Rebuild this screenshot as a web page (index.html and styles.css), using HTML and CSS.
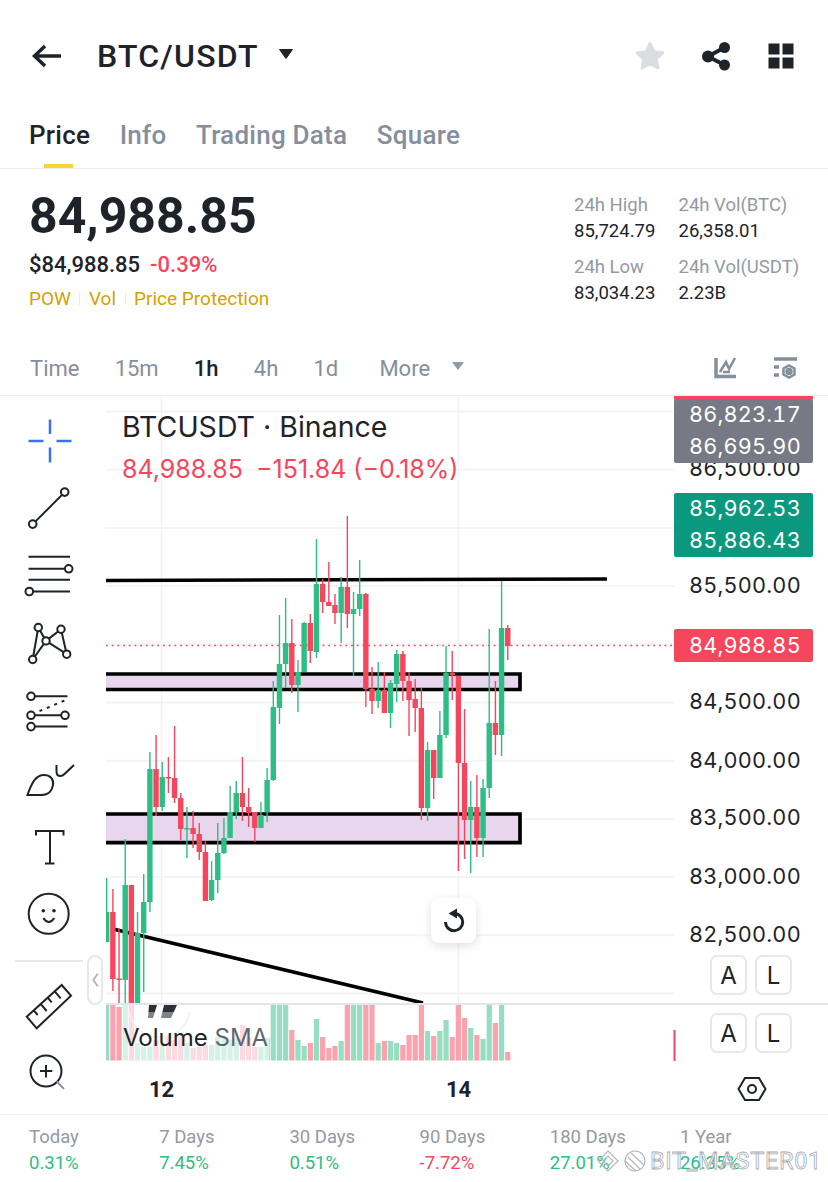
FILE: index.html
```html
<!DOCTYPE html>
<html lang="en">

<head>
    <meta charset="UTF-8">
    <meta name="viewport" content="width=device-width, initial-scale=1.0">
    <title>BTC/USDT</title>
    <link rel="stylesheet" href="styles.css">
</head>

<body>
    <header class="top-bar">
        <svg class="back" viewBox="0 0 30 24"><path d="M29 12H3M13 2L2.500 12L13 22" /></svg>
        <h1 class="pair">BTC/USDT</h1>
        <svg class="pair-caret" viewBox="0 0 16 12"><path d="M1.500 1.500H14.500L8 10.500Z" /></svg>
        <div class="top-actions">
            <svg class="star" viewBox="0 0 32 32"><path d="M16 3.500L19.800 11.700L28.800 12.800L22.200 19L23.900 27.900L16 23.500L8.100 27.900L9.800 19L3.200 12.800L12.200 11.700Z" /></svg>
            <svg class="share" viewBox="0 0 30 30">
                <path d="M22.500 6.500L6 15.500L22.500 24" />
                <circle cx="22.500" cy="6.500" r="5.500" />
                <circle cx="6" cy="15.500" r="6" />
                <circle cx="22.500" cy="24" r="5.500" />
            </svg>
            <svg class="apps" viewBox="0 0 26 26">
                <rect x="0.500" y="0.500" width="11" height="11" />
                <rect x="14.500" y="0.500" width="11" height="11" />
                <rect x="0.500" y="14.500" width="11" height="11" />
                <rect x="14.500" y="14.500" width="11" height="11" />
            </svg>
        </div>
    </header>

    <nav class="tabs">
        <a class="tab active">Price</a>
        <a class="tab">Info</a>
        <a class="tab">Trading Data</a>
        <a class="tab">Square</a>
    </nav>

    <section class="summary">
        <div class="quote">
            <div class="last">84,988.85</div>
            <div class="sub"><span>$84,988.85</span><span class="down">-0.39%</span></div>
            <div class="tags">
                <span>POW</span><i></i><span>Vol</span><i></i><span>Price Protection</span>
            </div>
        </div>
        <div class="stats">
            <div><label>24h High</label><b>85,724.79</b></div>
            <div><label>24h Vol(BTC)</label><b>26,358.01</b></div>
            <div><label>24h Low</label><b>83,034.23</b></div>
            <div><label>24h Vol(USDT)</label><b>2.23B</b></div>
        </div>
    </section>

    <div class="intervals">
        <span>Time</span>
        <span>15m</span>
        <span class="current">1h</span>
        <span>4h</span>
        <span>1d</span>
        <span class="more">More</span>
        <svg class="more-caret" viewBox="0 0 14 10"><path d="M1 1H13L7 9Z" /></svg>
        <div class="interval-icons">
            <svg viewBox="0 0 24 22">
                <path d="M2 1V19.500H22" />
                <path class="thin" d="M6 15L12 5L15 12L21 1" />
                <path class="thin" d="M9 15H16" />
            </svg>
            <svg viewBox="0 0 24 22">
                <path d="M1 2H24" />
                <path d="M1 10H6M1 18H6" />
                <path class="thin" d="M16 8.500L21.500 11.500V17.500L16 20.500L10.500 17.500V11.500Z" />
                <circle cx="16" cy="14.500" r="2" />
            </svg>
        </div>
    </div>

    <section class="chart">
        <div class="tools">
            <svg viewBox="16 407 68 67.600">
                <path class="blue" d="M50 419.500V434M50 447.500V462.500M28.500 441H43.500M56.500 441H71.500" />
            </svg>
            <svg viewBox="16 474.600 68 67.600">
                <path d="M35.500 521L62 494.500" />
                <circle cx="32.700" cy="523.700" r="3.800" />
                <circle cx="64.700" cy="491.700" r="3.800" />
            </svg>
            <svg viewBox="16 542.200 68 67.600">
                <path d="M28.500 557H70M28.500 569H65M28.500 580H70M33 591.700H70" />
                <circle cx="68.700" cy="569" r="3.800" />
                <circle cx="29.300" cy="591.700" r="3.800" />
            </svg>
            <svg viewBox="16 609.800 68 67.600">
                <path d="M38.300 627.300L32.700 659.300M38.300 627.300L46 640.700L32.700 659.300M46 640.700L61 629L66.700 654L46 640.700" />
                <circle cx="38.300" cy="627.300" r="3.700" />
                <circle cx="61" cy="629" r="3.700" />
                <circle cx="46" cy="640.700" r="3.700" />
                <circle cx="32.700" cy="659.300" r="3.700" />
                <circle cx="66.700" cy="654" r="3.700" />
            </svg>
            <svg viewBox="16 677.400 68 67.600">
                <path d="M35 696.700H67.500M35 715.700H61M35 727H67.500" />
                <path class="dash" d="M39.500 711.500L65 700.700" />
                <circle cx="31" cy="696.700" r="3.800" />
                <circle cx="31" cy="715.700" r="3.800" />
                <circle cx="65" cy="715.700" r="3.800" />
                <circle cx="31" cy="727" r="3.800" />
            </svg>
            <svg viewBox="16 745 68 67.600">
                <path d="M27.500 795C32 782 36 775 44 775C50 775 54 779 53 785C52 791 48 795 42 795Z" />
                <path d="M56.500 765V771.500Q56.500 776 60.500 776Q62.500 776 64.500 774L74 765" />
            </svg>
            <svg viewBox="16 812.600 68 67.600">
                <path d="M36 835V830.500H63.500V835M50 830.500V863M45 863H54.500" />
            </svg>
            <svg viewBox="16 880.200 68 67.600">
                <circle cx="48.700" cy="914" r="20" />
                <circle class="solid" cx="43.300" cy="911" r="1.800" />
                <circle class="solid" cx="54" cy="911" r="1.800" />
                <path d="M43.300 918.300Q48.700 926 54.300 918.300" />
            </svg>
            <hr class="tool-line">
            <svg viewBox="16 972 68 67.600">
                <path d="M26.700 1016.700L61.700 985L71 995.700L36.700 1028.300Z" />
                <path d="M33.700 1010.400L37.700 1015M40.700 1004.100L46.700 1011M47.700 997.700L51.700 1002.300M54.700 991.400L60.700 998.300" />
            </svg>
            <svg viewBox="16 1039.600 68 67.600">
                <circle cx="46" cy="1071.700" r="15.500" />
                <path d="M40 1071.700H52.300M46 1065.500V1078" />
                <path class="muted" d="M56.700 1082L64 1089.500" />
            </svg>
            <div class="collapse">
                <svg viewBox="0 0 10 18"><path d="M7.500 2L2.500 9L7.500 16" /></svg>
            </div>
        </div>

        <div class="plot">
            <svg id="canvas" class="canvas" viewBox="106 396 722 718"></svg>

            <div class="legend">
                <div class="legend-title">BTCUSDT · Binance</div>
                <div class="legend-values"><span>84,988.85</span><span>−151.84 (−0.18%)</span></div>
            </div>
            <div class="volume-legend">Volume <span>SMA</span></div>

            <div class="reset">
                <svg viewBox="0 0 28 28">
                    <path d="M14.300 6.500A8.600 8.600 0 1 1 5.500 15" />
                    <path class="solid" d="M17 1.500L8.500 6.500L17 11.500Z" />
                </svg>
            </div>

            <div class="scale-btns upper"><span>A</span><span>L</span></div>
            <div class="scale-btns lower"><span>A</span><span>L</span></div>

            <div class="time-label first">12</div>
            <div class="time-label second">14</div>
            <svg class="hex" viewBox="0 0 30 26">
                <path d="M8 2H22L28.500 13L22 24H8L1.500 13Z" />
                <circle cx="15" cy="13" r="4" />
            </svg>
        </div>
    </section>

    <footer class="returns">
        <div><label>Today</label><b class="up">0.31%</b></div>
        <div><label>7 Days</label><b class="up">7.45%</b></div>
        <div><label>30 Days</label><b class="up">0.51%</b></div>
        <div><label>90 Days</label><b class="down">-7.72%</b></div>
        <div><label>180 Days</label><b class="up">27.01%</b></div>
        <div><label>1 Year</label><b class="up">26.35%</b></div>
        <div class="watermark">
            <svg viewBox="0 0 50 22">
                <path d="M11 1L21 11L11 21L1 11ZM6 11L11 6L16 11L11 16Z" />
                <circle cx="38" cy="11" r="10" />
                <path d="M31 7L43 19M28 11L39 21M34 3L47 15" />
            </svg>
            <span>BIT_MASTER01</span>
        </div>
    </footer>

    <script src="chart.js"></script>
</body>

</html>
```

FILE: styles.css
```css
* {
    box-sizing: border-box;
}

body {
    margin: 0;
    width: 828px;
    height: 1182px;
    overflow: hidden;
    background: #fff;
    color: #1e2329;
    font-family: Roboto, 'Noto Sans', sans-serif;
}

.top-bar {
    display: flex;
    align-items: center;
    height: 112px;
    padding: 0 34px 0 32px;
}

.back {
    width: 30px;
    height: 24px;
    margin-right: 35px;
    fill: none;
    stroke: #1e2329;
    stroke-width: 3.5;
}

.pair {
    margin: 0;
    font-size: 32px;
    font-weight: 500;
    letter-spacing: 1.2px;
}

.pair-caret {
    width: 16px;
    height: 12px;
    margin: 0 0 4px 19px;
    fill: #1e2329;
    stroke: #1e2329;
    stroke-linejoin: round;
}

.top-actions {
    display: flex;
    align-items: center;
    gap: 36px;
    margin-left: auto;
}

.star {
    width: 32px;
    height: 32px;
    fill: #dadde1;
    stroke: #dadde1;
    stroke-width: 3;
    stroke-linejoin: round;
}

.share {
    width: 30px;
    height: 30px;
    fill: #1e2329;
}

.share path {
    fill: none;
    stroke: #1e2329;
    stroke-width: 4;
}

.apps {
    width: 26px;
    height: 26px;
    fill: #1e2329;
}

.tabs {
    display: flex;
    gap: 29.500px;
    height: 57px;
    padding-left: 29px;
    border-bottom: 1px solid #eceef0;
}

.tab {
    position: relative;
    height: 46px;
    line-height: 46px;
    font-size: 26px;
    font-weight: 500;
    letter-spacing: .25px;
    color: #848e9c;
}

.tab.active {
    color: #1e2329;
}

.tab.active::after {
    content: '';
    position: absolute;
    left: 15px;
    bottom: -10px;
    width: 29px;
    height: 4px;
    background: #fcd535;
}

.summary {
    display: flex;
    justify-content: space-between;
    height: 172px;
}

.quote {
    padding: 19px 0 0 29px;
}

.last {
    font-size: 50px;
    line-height: 56px;
    font-weight: 700;
}

.sub {
    display: flex;
    gap: 10px;
    margin-top: 7px;
    font-size: 22px;
    line-height: 28px;
    font-weight: 500;
}

.down {
    color: #f6465d;
}

.up {
    color: #2ebd85;
}

.tags {
    display: flex;
    align-items: center;
    gap: 8.500px;
    margin-top: 8px;
    font-size: 19px;
    line-height: 24px;
    color: #d89f00;
}

.tags i {
    width: 1px;
    height: 12px;
    background: #e6e8ea;
}

.stats {
    display: grid;
    grid-template-columns: 104.500px 1fr;
    grid-auto-rows: 62px;
    width: 254px;
    padding-top: 23px;
    font-size: 18.500px;
    line-height: 26px;
}

.stats label,
.returns label {
    display: block;
    color: #929aa5;
}

.stats b,
.returns b {
    display: block;
    font-weight: 400;
}

.intervals {
    display: flex;
    align-items: center;
    gap: 35.200px;
    height: 54px;
    padding: 0 31px 0 30px;
    font-size: 22px;
    color: #848e9c;
}

.intervals .current {
    color: #1e2329;
    font-weight: 500;
}

.more {
    margin-left: 6px;
}

.more-caret {
    width: 14px;
    height: 10px;
    margin: -4px 0 0 -14px;
    fill: #929aa5;
}

.interval-icons {
    display: flex;
    gap: 35px;
    margin-left: auto;
}

.interval-icons svg {
    width: 24px;
    height: 22px;
    fill: none;
    stroke: #848e9c;
    stroke-width: 3.5;
}

.interval-icons .thin {
    stroke-width: 2.500;
}

.chart {
    display: flex;
    height: 719px;
    border-top: 1px solid #eaecef;
}

.tools {
    position: relative;
    flex: none;
    width: 106px;
    padding: 11px 0 0 16px;
}

.tools > svg {
    display: block;
    width: 68px;
    height: 67.600px;
    fill: none;
    stroke: #1e2329;
    stroke-width: 2;
}

.tools circle {
    fill: #fff;
}

.tools .blue {
    stroke: #3b73e6;
    stroke-width: 2.500;
}

.tools .solid {
    fill: #1e2329;
    stroke: none;
}

.tools .dash {
    stroke-dasharray: 3 5;
}

.tools .muted {
    stroke: #848e9c;
}

.tool-line {
    width: 68px;
    height: 2px;
    margin: 12px 0 10px -1px;
    border: 0;
    background: #e6e8ea;
}

.collapse {
    position: absolute;
    left: 87px;
    top: 559px;
    display: flex;
    align-items: center;
    justify-content: center;
    width: 16px;
    height: 50px;
    background: #fff;
    border: 2px solid #e6e8ee;
    border-radius: 8px;
}

.collapse svg {
    width: 9px;
    height: 16px;
    fill: none;
    stroke: #aeb4bc;
    stroke-width: 2;
}

.plot {
    position: relative;
    flex: 1;
}

.canvas {
    display: block;
    width: 722px;
    height: 718px;
    font-family: Inter, Roboto, sans-serif;
}

.axis-text {
    font-size: 21.700px;
    letter-spacing: .2px;
    font-variant-numeric: tabular-nums;
    fill: #1e2329;
}

.tag-text {
    font-size: 21.700px;
    letter-spacing: .2px;
    font-variant-numeric: tabular-nums;
    fill: #fff;
}

.legend {
    position: absolute;
    left: 16px;
    top: 12px;
    font-family: Inter, Roboto, sans-serif;
}

.legend-title {
    font-size: 28.500px;
    line-height: 38px;
}

.legend-values {
    display: flex;
    gap: 13px;
    margin-top: 7px;
    font-size: 25px;
    line-height: 32px;
    color: #f6465d;
}

.volume-legend {
    position: absolute;
    left: 17px;
    top: 626px;
    font-family: Inter, Roboto, sans-serif;
    font-size: 24px;
    line-height: 32px;
}

.volume-legend span {
    color: #5e6673;
}

.reset {
    position: absolute;
    left: 325px;
    top: 502px;
    display: flex;
    align-items: center;
    justify-content: center;
    width: 45px;
    height: 45px;
    background: #fff;
    border-radius: 8px;
    box-shadow: 0 3px 10px rgba(30, 35, 41, .14);
}

.reset svg {
    width: 28px;
    height: 28px;
    fill: none;
    stroke: #1e2329;
    stroke-width: 3;
}

.reset .solid {
    fill: #1e2329;
    stroke: none;
}

.scale-btns {
    position: absolute;
    left: 604px;
    display: flex;
    gap: 8px;
}

.scale-btns.upper {
    top: 559px;
}

.scale-btns.lower {
    top: 617px;
}

.scale-btns span {
    width: 37px;
    height: 40px;
    line-height: 37px;
    text-align: center;
    font-family: Inter, Roboto, sans-serif;
    font-size: 24px;
    background: #fff;
    border: 2px solid #e6e8ee;
    border-radius: 7px;
}

.time-label {
    position: absolute;
    top: 680px;
    width: 40px;
    text-align: center;
    font-size: 22px;
    line-height: 28px;
    font-weight: 700;
}

.time-label.first {
    left: 35.500px;
}

.time-label.second {
    left: 332.500px;
}

.hex {
    position: absolute;
    left: 631px;
    top: 680px;
    width: 30px;
    height: 26px;
    fill: none;
    stroke: #1e2329;
    stroke-width: 2;
}

.returns {
    position: relative;
    display: grid;
    grid-template-columns: repeat(6, 130.200px);
    height: 68px;
    padding: 9px 0 0 29px;
    font-size: 18.500px;
    line-height: 26px;
    border-top: 1px solid #eff0f2;
}

.watermark {
    position: absolute;
    left: 597px;
    top: 33px;
    display: flex;
    align-items: center;
    gap: 3px;
    font-size: 23.500px;
    line-height: 26px;
    letter-spacing: .7px;
    color: rgba(255, 255, 255, .7);
    -webkit-text-stroke: .8px #a9adb2;
}

.watermark svg {
    width: 50px;
    height: 22px;
    fill: none;
    stroke: #b4b7bb;
    stroke-width: 1.200;
}
```

FILE: chart.js
```js
const GREEN = '#2ebd85'
const RED = '#f6465d'
const X0 = 106.7
const STEP = 6.17

// colour, wick top, wick bottom, body top, body bottom, volume top
const candles = [
    ['g', 878, 942, 912, 942, 1005],
    ['r', 889, 991, 912, 979, 1005],
    ['r', 928, 1003, 978.5, 980, 1007],
    ['g', 839, 1003, 885, 980, 1005],
    ['r', 885, 1003, 885, 1003, 1005],
    ['g', 912, 1003, 933, 1003, 1043],
    ['g', 874, 992, 902, 933, 1047],
    ['g', 752, 912, 769, 902, 1047],
    ['r', 735, 816, 769, 807, 1040],
    ['g', 762, 811, 777, 807, 1045],
    ['r', 757, 793, 777, 778, 1037],
    ['r', 726, 803, 778, 798, 1040],
    ['r', 793, 840, 798, 829, 1037],
    ['g', 807, 858, 828, 829, 1043],
    ['r', 811, 848, 828, 834, 1048],
    ['r', 823, 860, 834, 852, 1047],
    ['r', 841, 901, 852, 901, 1045],
    ['g', 861, 901, 880, 900, 1045],
    ['g', 823, 893, 853, 880, 1037],
    ['g', 818, 854, 838, 853, 1038],
    ['g', 786, 838, 812, 838, 1040],
    ['g', 781, 819, 793, 812, 1038],
    ['r', 757, 821, 793, 807, 1025],
    ['r', 788, 827, 807, 813, 1037],
    ['r', 812, 842, 812, 828, 1047],
    ['g', 802, 828, 815, 828, 1047],
    ['g', 768, 822, 780, 812, 1038],
    ['g', 681, 781, 707, 780, 1005],
    ['g', 615, 724, 664, 708, 1005],
    ['g', 598, 688, 643, 664, 1005],
    ['r', 619, 693, 643, 685, 1030],
    ['g', 660, 712, 672, 685, 1040],
    ['g', 622, 672, 623, 672, 1046],
    ['r', 614, 663, 623, 651, 1043],
    ['g', 539, 658, 584, 652, 1019],
    ['r', 579, 613, 584, 602, 1037],
    ['r', 562, 606, 602, 606, 1048],
    ['r', 594, 624, 605, 613, 1046],
    ['g', 577, 643, 587, 613, 1041],
    ['r', 516, 628, 587, 614, 1005],
    ['g', 592, 676, 609, 614, 1005],
    ['g', 560, 616, 594, 609, 1005],
    ['r', 593, 707, 594, 689, 1005],
    ['r', 667, 714, 689, 701, 1005],
    ['g', 662, 708, 690, 701, 1043],
    ['r', 672, 713, 690, 713, 1041],
    ['g', 680, 728, 683, 713, 1041],
    ['g', 650, 702, 654, 684, 1043],
    ['r', 651, 701, 654, 681, 1045],
    ['r', 672, 736, 681, 700, 1035],
    ['r', 679, 732, 699, 708, 1035],
    ['r', 688, 820, 708, 808, 1005],
    ['g', 742, 821, 750, 808, 1031],
    ['r', 750, 799, 750, 778, 1036],
    ['g', 711, 778, 735, 778, 1031],
    ['g', 646, 738, 673, 735, 1020],
    ['r', 651, 700, 673, 675, 1037],
    ['r', 676, 871, 676, 763, 1005],
    ['r', 709, 859, 763, 820, 1018],
    ['g', 781, 873, 807, 820, 1028],
    ['r', 775, 857, 807, 838, 1035],
    ['g', 779, 857, 788, 838, 1039],
    ['g', 629, 798, 723, 788, 1005],
    ['r', 681, 755, 723, 735, 1023],
    ['g', 581, 756, 628, 735, 1005],
    ['r', 625, 660, 628, 646, 1052],
]

const gridLines = [411.5, 469.7, 527.9, 586.1, 644.3, 702.5, 760.7, 818.9, 877.1, 935.3, 993.5]

const axisLabels = [
    ['86,500.00', 476],
    ['85,500.00', 593],
    ['84,500.00', 709],
    ['84,000.00', 767.5],
    ['83,500.00', 825],
    ['83,000.00', 884],
    ['82,500.00', 942],
]

let out = ''

gridLines.forEach(y => {
    out += `<line x1="106" x2="674" y1="${y}" y2="${y}" stroke="#f3f4f6" stroke-width="2"/>`
})
out += '<line x1="161.5" x2="161.5" y1="396" y2="1004" stroke="#f1f2f4" stroke-width="1.5"/>'
out += '<line x1="458.5" x2="458.5" y1="396" y2="1004" stroke="#f1f2f4" stroke-width="1.5"/>'

// hand-drawn levels
out += '<path d="M106 674H520V689.500H106Z M106 814H520V842.700H106Z" fill="#e8d6ee"/>'
out += '<path d="M106 674H520V689.500H106 M106 814H520V842.700H106" fill="none" stroke="#000" stroke-width="3.700"/>'
out += '<path d="M106 580.500L607 579" stroke="#000" stroke-width="3.500"/>'
out += '<path d="M113 929L423 1003" stroke="#000" stroke-width="3.500"/>'

// last price line
out += `<line x1="106" x2="674" y1="645.5" y2="645.5" stroke="${RED}" stroke-width="1.6" stroke-dasharray="1.8 3.9"/>`

candles.forEach((c, i) => {
    const x = X0 + i * STEP
    const color = c[0] == 'g' ? GREEN : RED
    out += `<rect x="${x - 0.7}" y="${c[1]}" width="1.4" height="${c[2] - c[1]}" fill="${color}"/>`
    out += `<rect x="${x - 2.7}" y="${c[3]}" width="5.4" height="${Math.max(c[4] - c[3], 1.5)}" fill="${color}"/>`
})

// volume pane
out += '<rect x="106" y="1004" width="722" height="60" fill="#fff"/>'
out += '<line x1="106" x2="828" y1="1004" y2="1004" stroke="#e3e5ec" stroke-width="2"/>'
candles.forEach((c, i) => {
    const x = X0 + i * STEP
    const color = c[0] == 'g' ? GREEN : RED
    out += `<rect x="${x - 2.6}" y="${c[5]}" width="5.2" height="${1060.5 - c[5]}" fill="${color}" opacity=".5"/>`
})
out += '<rect x="122" y="1005" width="147" height="56" fill="#fff" opacity=".6"/>'

// watermark sitting under the pane edge
out += '<path d="M129 1012A31 31 0 0 0 190 1012" fill="none" stroke="#eef0f3" stroke-width="1.5"/>'
out += '<path d="M149 1005H157L153 1018H148Z M164 1005H177L171 1018H161Z" fill="#2b2f36"/>'
out += '<rect x="148" y="1012" width="30" height="6" fill="#fff" opacity=".4"/>'
out += `<rect x="673.5" y="1030" width="2" height="31" fill="${RED}"/>`

// price axis
axisLabels.forEach(l => {
    out += `<text class="axis-text" x="689" y="${l[1]}">${l[0]}</text>`
})

// price tags
out += `<rect x="674" y="394.5" width="139" height="5" fill="${RED}"/>`
out += '<rect x="674" y="399" width="139" height="64" rx="2" fill="#777a85"/>'
out += '<text class="tag-text" x="689" y="422">86,823.17</text>'
out += '<text class="tag-text" x="689" y="454">86,695.90</text>'
out += '<rect x="674" y="493" width="139" height="64" rx="2" fill="#0a997f"/>'
out += '<text class="tag-text" x="689" y="516">85,962.53</text>'
out += '<text class="tag-text" x="689" y="548">85,886.43</text>'
out += `<rect x="674" y="629" width="139" height="33" rx="2" fill="${RED}"/>`
out += '<text class="tag-text" x="689" y="653">84,988.85</text>'

document.getElementById('canvas').innerHTML = out
```
